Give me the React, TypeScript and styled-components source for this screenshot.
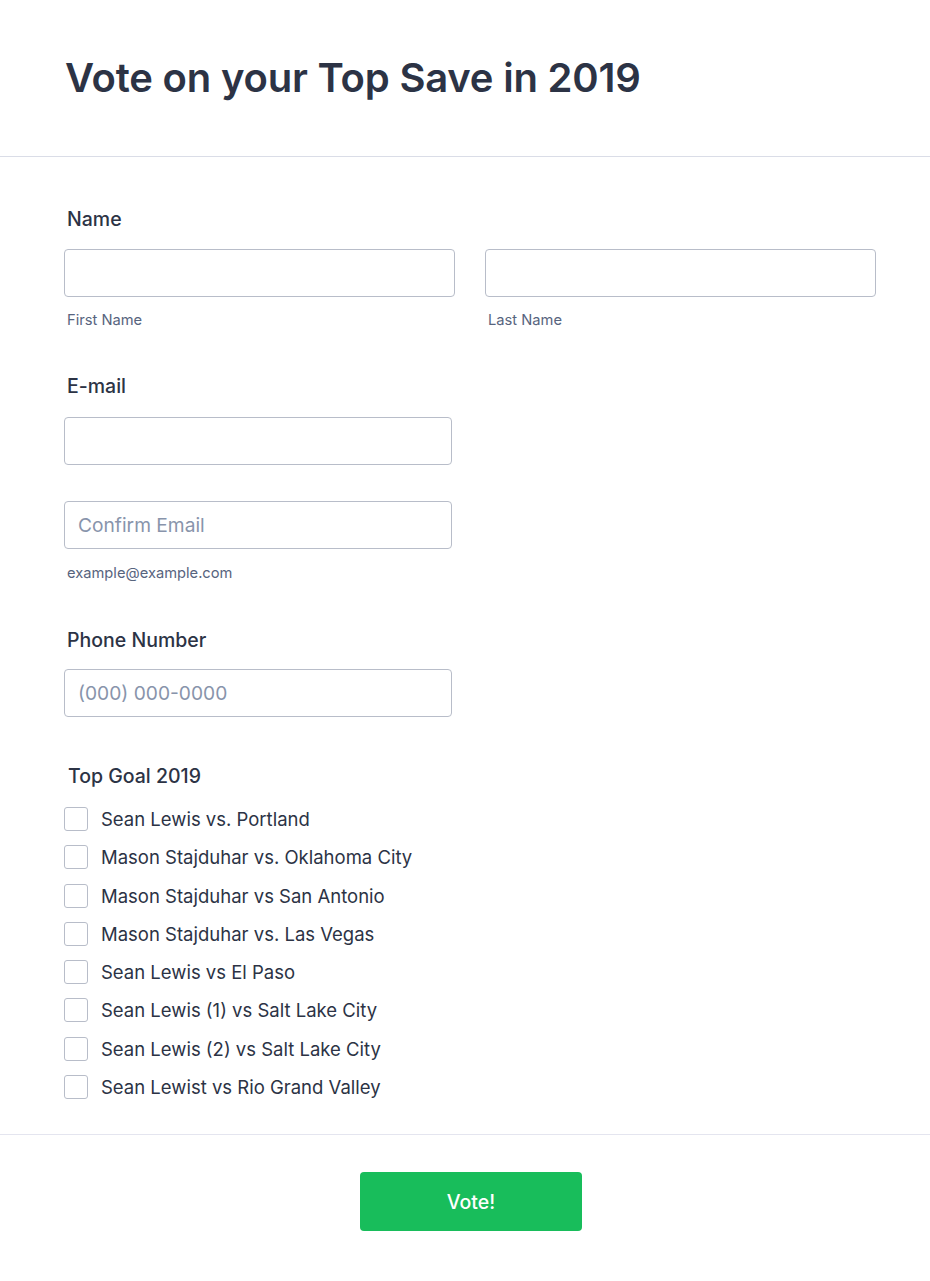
import React from "react";
import styled, { createGlobalStyle } from "styled-components";

const Global = createGlobalStyle`
  html, body { margin: 0; padding: 0; background: #ffffff; }
  body { font-family: Inter, "Noto Sans", sans-serif; color: #2c3345; }
  * { box-sizing: border-box; }
  input::placeholder { color: #8894ab; opacity: 1; }
`;

const Page = styled.div`
  width: 930px;
  min-height: 1281px;
  background: #fff;
`;

const Header = styled.header`
  height: 157px;
  border-bottom: 1px solid #dadde7;
  padding: 54px 0 0 65px;
`;

const Title = styled.h1`
  margin: 0;
  font-size: 40px;
  line-height: 48px;
  font-weight: 600;
  color: #2c3345;
  letter-spacing: -0.2px;
`;

const Form = styled.form`
  padding: 50px 55px 0 64px;
  display: flex;
  flex-direction: column;
`;

const Label = styled.div<{ $mb?: number; $ml?: number }>`
  font-size: 19.5px;
  line-height: 24px;
  font-weight: 500;
  color: #2c3345;
  margin-left: ${(p) => p.$ml ?? 3}px;
  margin-bottom: ${(p) => p.$mb ?? 18}px;
`;

const Section = styled.div<{ $mt?: number }>`
  margin-top: ${(p) => p.$mt ?? 0}px;
  display: flex;
  flex-direction: column;
`;

const Row = styled.div`
  display: grid;
  grid-template-columns: 391px 391px;
  column-gap: 30px;
`;

const Col = styled.div`
  display: flex;
  flex-direction: column;
`;

const Input = styled.input<{ $w?: number }>`
  width: ${(p) => (p.$w ? `${p.$w}px` : "100%")};
  height: 48px;
  border: 1px solid #b8bdc9;
  border-radius: 4px;
  padding: 0 13px;
  font-family: Inter, "Noto Sans", sans-serif;
  font-size: 19.2px;
  color: #2c3345;
  background: #fff;
  outline: none;
`;

const Sub = styled.div<{ $mt?: number }>`
  font-size: 14.7px;
  line-height: 20px;
  color: #57647e;
  margin: ${(p) => p.$mt ?? 13}px 0 0 3px;
`;

const Checks = styled.div`
  display: flex;
  flex-direction: column;
  gap: 14.3px;
`;

const CheckRow = styled.label`
  display: flex;
  align-items: center;
  gap: 13px;
  height: 24px;
  font-size: 18.5px;
  color: #2c3345;
  cursor: pointer;
`;

const Box = styled.span`
  width: 24px;
  height: 24px;
  border: 1px solid #b8bdc9;
  border-radius: 3px;
  background: #fff;
  flex: none;
`;

const Footer = styled.div`
  margin-top: 35px;
  border-top: 1px solid #e4e5ef;
  display: flex;
  justify-content: center;
  padding: 37px 0 50px 12px;
`;

const Button = styled.button`
  width: 222px;
  height: 59px;
  background: #18bd5b;
  border: none;
  border-radius: 4px;
  color: #fff;
  font-family: Inter, "Noto Sans", sans-serif;
  font-size: 19.5px;
  font-weight: 500;
  cursor: pointer;
`;

const options = [
  "Sean Lewis vs. Portland",
  "Mason Stajduhar vs. Oklahoma City",
  "Mason Stajduhar vs San Antonio",
  "Mason Stajduhar vs. Las Vegas",
  "Sean Lewis vs El Paso",
  "Sean Lewis (1) vs Salt Lake City",
  "Sean Lewis (2) vs Salt Lake City",
  "Sean Lewist vs Rio Grand Valley",
];

export default function App() {
  return (
    <Page>
      <Global />
      <Header>
        <Title>Vote on your Top Save in 2019</Title>
      </Header>
      <Form onSubmit={(e) => e.preventDefault()}>
        <Section>
          <Label>Name</Label>
          <Row>
            <Col>
              <Input />
              <Sub>First Name</Sub>
            </Col>
            <Col>
              <Input />
              <Sub>Last Name</Sub>
            </Col>
          </Row>
        </Section>
        <Section $mt={44}>
          <Label $mb={19}>E-mail</Label>
          <Input $w={388} />
          <Section $mt={36}>
            <Input $w={388} placeholder="Confirm Email" />
            <Sub $mt={14}>example@example.com</Sub>
          </Section>
        </Section>
        <Section $mt={45}>
          <Label $mb={17}>Phone Number</Label>
          <Input $w={388} placeholder="(000) 000-0000" />
        </Section>
        <Section $mt={47}>
          <Label $mb={19} $ml={4}>Top Goal 2019</Label>
          <Checks>
            {options.map((o) => (
              <CheckRow key={o}>
                <Box />
                {o}
              </CheckRow>
            ))}
          </Checks>
        </Section>
      </Form>
      <Footer>
        <Button type="button">Vote!</Button>
      </Footer>
    </Page>
  );
}
